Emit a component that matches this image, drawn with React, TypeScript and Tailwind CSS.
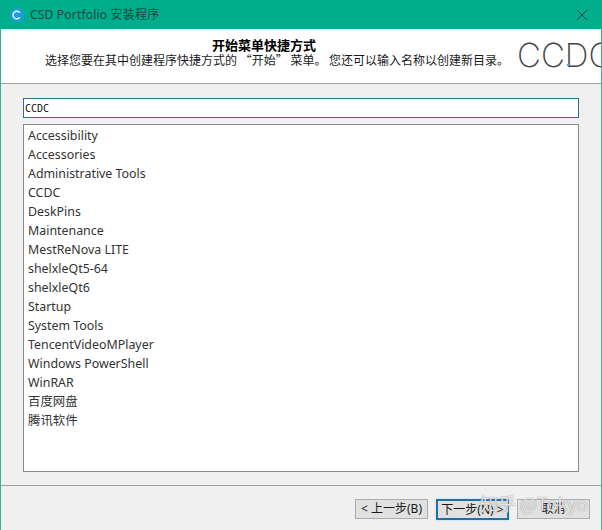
const folders = [
  "Accessibility",
  "Accessories",
  "Administrative Tools",
  "CCDC",
  "DeskPins",
  "Maintenance",
  "MestReNova LITE",
  "shelxleQt5-64",
  "shelxleQt6",
  "Startup",
  "System Tools",
  "TencentVideoMPlayer",
  "Windows PowerShell",
  "WinRAR",
  "百度网盘",
  "腾讯软件",
];

const uiFont = "font-['Noto_Sans','Noto_Sans_CJK_SC',sans-serif]";
const cjkFont = "font-['Noto_Sans_CJK_SC',sans-serif]";

export default function App() {
  return (
    <div className={`relative flex h-[530px] w-[602px] flex-col overflow-hidden bg-[#f0f0f0] text-[12px] text-[#1a1a1a] ${uiFont}`}>
      {/* Title bar */}
      <div className="flex h-[29px] shrink-0 items-center justify-between bg-[#00ae8e] pl-[10px] pr-[14px]">
        <div className="flex items-center gap-[6px]">
          <svg width="14" height="14" viewBox="0 0 14 14" fill="none">
            <circle cx="7" cy="7" r="7" fill="#1f9ede" />
            <path d="M9.8 4.6A3.8 3.8 0 1 0 9.8 9.4" stroke="#e8f7ff" strokeWidth="1.4" />
          </svg>
          <span className="text-[12px] tracking-[0.2px] text-[#16463c]">CSD Portfolio 安装程序</span>
        </div>
        <svg width="12" height="12" viewBox="0 0 12 12" fill="none" stroke="#123f36" strokeWidth="1">
          <path d="M1 1L11 11M11 1L1 11" />
        </svg>
      </div>

      <div className="flex min-h-0 flex-1 flex-col border-x border-x-[#2cb89f]">
        {/* Header */}
        <div className="flex h-[55px] shrink-0 overflow-hidden border-b border-[#a0a0a0] bg-white">
          <div className={`w-[516px] shrink-0 whitespace-nowrap pt-[8px] leading-[15px] ${cjkFont}`}>
            <div className="pl-[211px] text-[13px] font-bold text-black">开始菜单快捷方式</div>
            <div className="pl-[44px]">选择您要在其中创建程序快捷方式的 “开始” 菜单。 您还可以输入名称以创建新目录。</div>
          </div>
          <div className="relative mt-[6px] whitespace-nowrap font-['Inter',sans-serif] text-[33px] font-extralight leading-[40px] text-[#444]">
            CCDC
            <span className="absolute left-[50px] top-[29px] h-[2px] w-[2px] bg-[#5aa5d8]" />
          </div>
        </div>

        {/* Body */}
        <div className="flex min-h-0 flex-1 flex-col px-[22px] pt-[14px]">
          <div className="flex h-[20px] w-[556px] shrink-0 items-center border border-[#2f6f8f] bg-white px-[1px] font-['DejaVu_Sans_Mono',monospace] text-[10px] text-[#111]">
            CCDC
          </div>
          <div className="mt-[6px] h-[348px] w-[556px] shrink-0 border border-[#8a8a8a] bg-white pl-[4px] pt-[1px]">
            {folders.map((name) => (
              <div key={name} className="h-[19px] text-[12.4px] leading-[19px] text-[#333]">
                {name}
              </div>
            ))}
          </div>
        </div>

        {/* Footer */}
        <div className="flex h-[45px] shrink-0 items-start justify-end gap-[8px] border-t border-[#a0a0a0] pr-[11px] pt-[13px]">
          <button className="flex h-[20px] w-[73px] items-center justify-center border border-[#adadad] bg-[#e1e1e1]">
            &lt; 上一步(B)
          </button>
          <button className="flex h-[21px] w-[73px] items-center justify-center border-2 border-[#1f6fa8] bg-[#e1e1e1] shadow-[0_0_2px_#9fdcf5]">
            下一步(N) &gt;
          </button>
          <button className="flex h-[20px] w-[73px] items-center justify-center border border-[#adadad] bg-[#e1e1e1]">
            取消
          </button>
        </div>
      </div>

      {/* Watermark */}
      <div className={`pointer-events-none absolute left-[480px] top-[491px] whitespace-nowrap text-[18px] leading-[24px] text-white/80 [text-shadow:0_0_1px_#666] ${cjkFont}`}>
        知乎 @Tokyo
      </div>
    </div>
  );
}
